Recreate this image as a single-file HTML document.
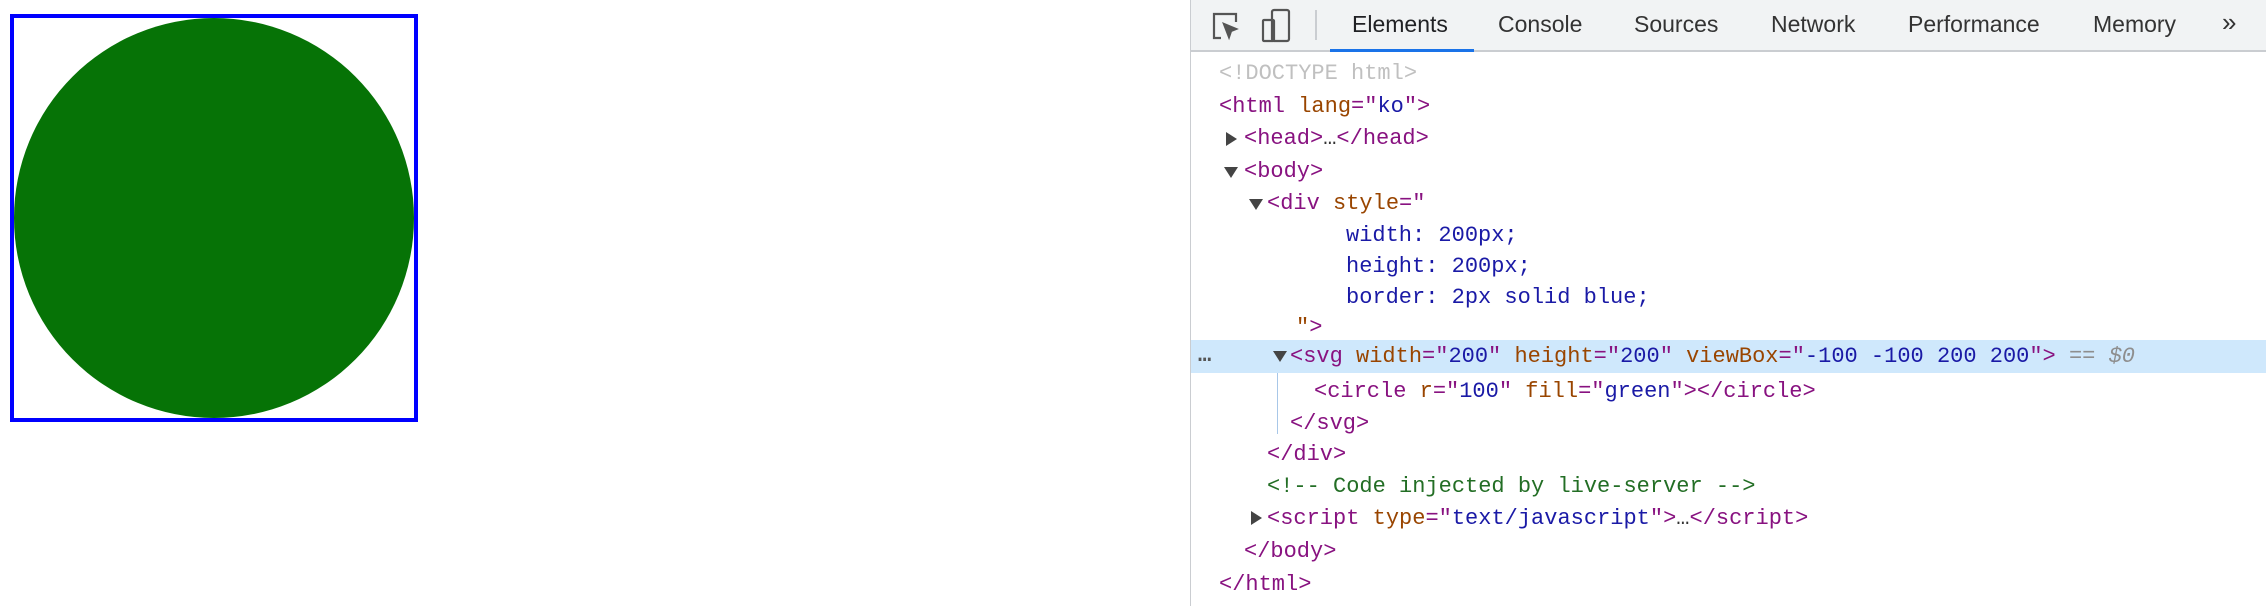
<!DOCTYPE html>
<html><head><style>
html,body{margin:0;padding:0;width:2266px;height:606px;overflow:hidden;background:#fff;position:relative}
.box{position:absolute;left:10px;top:14px;width:400px;height:400px;border:4px solid #0000ff}
.dt{position:absolute;left:1190px;top:0;width:1076px;height:606px;border-left:1px solid #cacdd1;background:#fff}
.tb{position:absolute;left:0;top:0;width:1076px;height:50px;background:#f1f3f4;border-bottom:2px solid #cacdd1}
.tab{position:absolute;top:11px;font:23px "Liberation Sans",sans-serif;color:#333}
.ln{position:absolute;white-space:pre;font:22px/32px "Liberation Mono",monospace;color:#881280;margin-top:3px}
.a{color:#994500}.v{color:#1a1aa6}.c{color:#236e25}
.tri{position:absolute;width:0;height:0;margin-top:3px}
.r{border-top:7px solid transparent;border-bottom:7px solid transparent;border-left:11px solid #444}
.d{border-left:7px solid transparent;border-right:7px solid transparent;border-top:11px solid #444}
</style></head><body>
<div class="box"></div>
<svg style="position:absolute;left:14px;top:18px" width="400" height="400"><circle cx="200" cy="200" r="200" fill="#067306"/></svg>
<div class="dt">
 <div class="tb">
  <svg style="position:absolute;left:18px;top:10px" width="32" height="32" viewBox="0 0 32 32" fill="none" stroke="#555" stroke-width="2.2"><path d="M12 28H5V4h22v8"/><path d="M15 14l12 5-5 2-2 6z" fill="#555"/></svg>
  <svg style="position:absolute;left:70px;top:8px" width="32" height="36" viewBox="0 0 32 36" fill="none" stroke="#555" stroke-width="2.2"><rect x="11" y="2" width="17" height="31" rx="2"/><rect x="2" y="12" width="11" height="21" rx="1"/></svg>
  <div style="position:absolute;left:124px;top:10px;width:2px;height:30px;background:#cacdd1"></div>
  <div class="tab" style="left:161px;color:#202124">Elements</div>
  <div style="position:absolute;left:139px;top:49px;width:144px;height:3px;background:#1a73e8"></div>
  <div class="tab" style="left:307px">Console</div>
  <div class="tab" style="left:443px">Sources</div>
  <div class="tab" style="left:580px">Network</div>
  <div class="tab" style="left:717px">Performance</div>
  <div class="tab" style="left:902px">Memory</div>
  <div class="tab" style="left:1031px;top:7px;font-size:26px">»</div>
 </div>
 <div style="position:absolute;left:0;top:340px;width:1076px;height:33px;background:#cfe8fc"></div>
 <div style="position:absolute;left:86px;top:373px;width:1px;height:61px;background:#a8c7e8"></div>
 <div class="ln" style="left:7px;top:337px;color:#555;font-weight:bold">…</div>
 <div class="ln" style="left:28px;top:55px;color:#c0c0c0">&lt;!DOCTYPE html&gt;</div>
 <div class="ln" style="left:28px;top:88px">&lt;html <span class="a">lang</span>="<span class="v">ko</span>"&gt;</div>
 <div class="tri r" style="left:35px;top:129px"></div>
 <div class="ln" style="left:53px;top:120px">&lt;head&gt;<span style="color:#333">…</span>&lt;/head&gt;</div>
 <div class="tri d" style="left:33px;top:164px"></div>
 <div class="ln" style="left:53px;top:153px">&lt;body&gt;</div>
 <div class="tri d" style="left:58px;top:196px"></div>
 <div class="ln" style="left:76px;top:185px">&lt;div <span class="a">style</span>="</div>
 <div class="ln v" style="left:155px;top:217px">width: 200px;</div>
 <div class="ln v" style="left:155px;top:248px">height: 200px;</div>
 <div class="ln v" style="left:155px;top:279px">border: 2px solid blue;</div>
 <div class="ln" style="left:105px;top:309px"><span class="a">"</span>&gt;</div>
 <div class="tri d" style="left:82px;top:348px"></div>
 <div class="ln" style="left:99px;top:338px">&lt;svg <span class="a">width</span>="<span class="v">200</span>" <span class="a">height</span>="<span class="v">200</span>" <span class="a">viewBox</span>="<span class="v">-100 -100 200 200</span>"&gt; <span style="color:#8e8e8e">== <i>$0</i></span></div>
 <div class="ln" style="left:123px;top:373px">&lt;circle <span class="a">r</span>="<span class="v">100</span>" <span class="a">fill</span>="<span class="v">green</span>"&gt;&lt;/circle&gt;</div>
 <div class="ln" style="left:99px;top:405px">&lt;/svg&gt;</div>
 <div class="ln" style="left:76px;top:436px">&lt;/div&gt;</div>
 <div class="ln c" style="left:76px;top:468px">&lt;!-- Code injected by live-server --&gt;</div>
 <div class="tri r" style="left:60px;top:508px"></div>
 <div class="ln" style="left:76px;top:500px">&lt;script <span class="a">type</span>="<span class="v">text/javascript</span>"&gt;<span style="color:#333">…</span>&lt;/script&gt;</div>
 <div class="ln" style="left:53px;top:533px">&lt;/body&gt;</div>
 <div class="ln" style="left:28px;top:566px">&lt;/html&gt;</div>
</div>
</body></html>
